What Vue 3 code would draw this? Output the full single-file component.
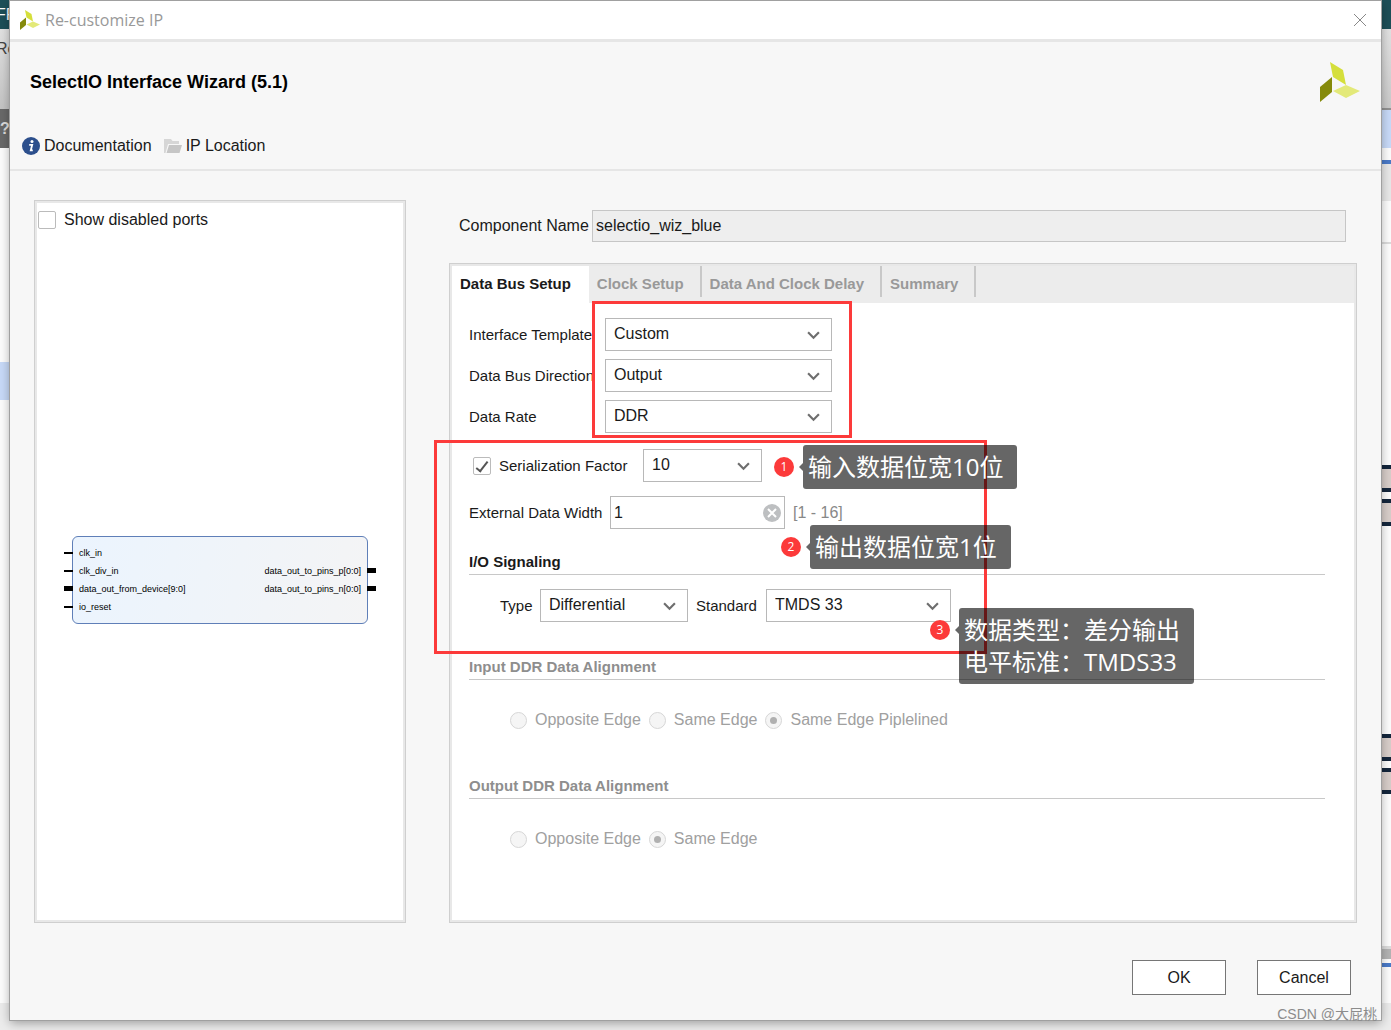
<template>
  <div class="desktop">
    <div class="strip strip-left">
      <span class="peek peek-title">FP</span>
      <span class="peek peek-menu">Re</span>
      <span class="peek peek-help">?</span>
    </div>

    <main class="dialog">
      <header class="titlebar">
        <svg class="logo-small" viewBox="0 0 40 40">
          <path d="M10 0 L23 8 L26 23 L13 15 Z" fill="#d5df3b" />
          <path d="M0 25 L12 15 V30 L0 40 Z" fill="#858a0b" />
          <path d="M13 29 L26 23 L40 29 L26 36 Z" fill="#e3e979" />
        </svg>
        <span class="titlebar-text">Re-customize IP</span>
        <button class="close" aria-label="Close">
          <svg viewBox="0 0 12 12"><path d="M0 0 L12 12 M12 0 L0 12" /></svg>
        </button>
      </header>

      <section class="banner">
        <div class="banner-top">
          <h1>SelectIO Interface Wizard (5.1)</h1>
          <svg class="logo" viewBox="0 0 40 40">
            <path d="M10 0 L23 8 L26 23 L13 15 Z" fill="#d5df3b" />
            <path d="M0 25 L12 15 V30 L0 40 Z" fill="#858a0b" />
            <path d="M13 29 L26 23 L40 29 L26 36 Z" fill="#e3e979" />
          </svg>
        </div>
        <nav class="links">
          <a href="#documentation">
            <svg class="icon" viewBox="0 0 18 18">
              <circle cx="9" cy="9" r="9" fill="#2c4f8c" />
              <circle cx="10" cy="4.600" r="1.500" fill="#fff" />
              <path d="M7.200 7.800 H10.200 L8.800 13.400 H10.800" fill="none" stroke="#fff" stroke-width="1.800" />
            </svg>
            Documentation
          </a>
          <a href="#location">
            <svg class="icon" viewBox="0 0 18 18">
              <path d="M0 16 V2 H7 L8.500 4 H15 V7 H4 L1.500 16 Z" fill="#d6d6d6" />
              <path d="M5 8 H18 L15.500 16 H2.500 Z" fill="#c6c6c6" />
            </svg>
            IP Location
          </a>
        </nav>
      </section>

      <div class="content">
        <section class="preview">
          <label class="check">
            <input v-model="showDisabled" type="checkbox" />
            Show disabled ports
          </label>
          <div class="canvas">
            <div class="block">
              <ul>
                <li v-for="p in inputs" :key="p.name" :class="{ bus: p.bus }">{{ p.name }}</li>
              </ul>
              <ul class="outputs">
                <li v-for="p in outputs" :key="p.name" :class="{ bus: p.bus }">{{ p.name }}</li>
              </ul>
            </div>
          </div>
        </section>

        <section class="config">
          <div class="component">
            <label for="component-name">Component Name</label>
            <input id="component-name" value="selectio_wiz_blue" readonly />
          </div>

          <div class="tabs">
            <div class="tab-list" role="tablist">
              <button
                v-for="tab in tabs"
                :key="tab"
                role="tab"
                :class="{ active: tab === activeTab }"
                @click="activeTab = tab"
              >{{ tab }}</button>
            </div>

            <form class="form" @submit.prevent>
              <div v-for="f in busFields" :key="f.id" class="row">
                <label :for="f.id" class="row-label">{{ f.label }}</label>
                <span class="select wide">
                  <select :id="f.id" v-model="f.value">
                    <option v-for="o in f.options" :key="o">{{ o }}</option>
                  </select>
                  <svg viewBox="0 0 12 8"><path d="M1 1 L6 6 L11 1" /></svg>
                </span>
              </div>

              <div class="row row-serial">
                <label class="check">
                  <input v-model="serialize" type="checkbox" />
                  Serialization Factor
                </label>
                <span class="select narrow">
                  <select v-model="factor" aria-label="Factor">
                    <option>4</option>
                    <option>8</option>
                    <option>10</option>
                  </select>
                  <svg viewBox="0 0 12 8"><path d="M1 1 L6 6 L11 1" /></svg>
                </span>
              </div>

              <div class="row row-width">
                <label for="data-width">External Data Width</label>
                <span class="textbox">
                  <input id="data-width" v-model="dataWidth" />
                  <button type="button" aria-label="Clear" @click="dataWidth = ''">
                    <svg viewBox="0 0 18 18">
                      <circle cx="9" cy="9" r="9" fill="#bdbfc1" />
                      <path d="M5 5 L13 13 M13 5 L5 13" stroke="#fff" stroke-width="2" />
                    </svg>
                  </button>
                </span>
                <span class="range">[1 - 16]</span>
              </div>

              <h2>I/O Signaling</h2>
              <div class="row row-io">
                <label for="io-type" class="type-label">Type</label>
                <span class="select medium">
                  <select id="io-type" v-model="ioType">
                    <option>Differential</option>
                    <option>Single Ended</option>
                  </select>
                  <svg viewBox="0 0 12 8"><path d="M1 1 L6 6 L11 1" /></svg>
                </span>
                <label for="io-standard" class="standard-label">Standard</label>
                <span class="select standard">
                  <select id="io-standard" v-model="ioStandard">
                    <option>TMDS 33</option>
                    <option>LVDS 25</option>
                  </select>
                  <svg viewBox="0 0 12 8"><path d="M1 1 L6 6 L11 1" /></svg>
                </span>
              </div>

              <template v-for="g in alignments" :key="g.id">
                <h2 class="disabled">{{ g.title }}</h2>
                <div class="radios">
                  <label v-for="o in g.options" :key="o">
                    <input type="radio" :name="g.id" :value="o" :checked="o === g.value" disabled />
                    {{ o }}
                  </label>
                </div>
              </template>
            </form>

            <div class="mark mark-bus"></div>
            <div class="mark mark-io"></div>
            <div v-for="(c, i) in callouts" :key="i" class="callout" :class="'callout-' + (i + 1)">
              <span class="badge">{{ i + 1 }}</span>
              <p class="bubble">
                <span v-for="line in c" :key="line">{{ line }}</span>
              </p>
            </div>
          </div>
        </section>
      </div>

      <footer class="actions">
        <button>OK</button>
        <button>Cancel</button>
      </footer>
    </main>

    <div class="strip strip-right"></div>
    <span class="watermark">CSDN @大屁桃</span>
  </div>
</template>

<script setup>
import { ref } from 'vue'

const showDisabled = ref(false)
const serialize = ref(true)
const factor = ref('10')
const dataWidth = ref('1')
const ioType = ref('Differential')
const ioStandard = ref('TMDS 33')

const tabs = ['Data Bus Setup', 'Clock Setup', 'Data And Clock Delay', 'Summary']
const activeTab = ref(tabs[0])

const inputs = [
  { name: 'clk_in' },
  { name: 'clk_div_in' },
  { name: 'data_out_from_device[9:0]', bus: true },
  { name: 'io_reset' },
]
const outputs = [
  { name: 'data_out_to_pins_p[0:0]', bus: true },
  { name: 'data_out_to_pins_n[0:0]', bus: true },
]

const busFields = ref([
  { id: 'template', label: 'Interface Template', value: 'Custom', options: ['Custom', 'SGMII', 'DVI Transmitter'] },
  { id: 'direction', label: 'Data Bus Direction', value: 'Output', options: ['Input', 'Output', 'Bidirectional'] },
  { id: 'rate', label: 'Data Rate', value: 'DDR', options: ['SDR', 'DDR'] },
])

const alignments = [
  {
    id: 'input-ddr',
    title: 'Input DDR Data Alignment',
    options: ['Opposite Edge', 'Same Edge', 'Same Edge Piplelined'],
    value: 'Same Edge Piplelined',
  },
  {
    id: 'output-ddr',
    title: 'Output DDR Data Alignment',
    options: ['Opposite Edge', 'Same Edge'],
    value: 'Same Edge',
  },
]

const callouts = [
  ['输入数据位宽10位'],
  ['输出数据位宽1位'],
  ['数据类型：差分输出', '电平标准：TMDS33'],
]
</script>

<style>
body {
  margin: 0;
  background: #ececec;
}
</style>

<style scoped>
*, *::before, *::after { box-sizing: border-box; }

.desktop {
  position: relative;
  display: grid;
  grid-template-columns: 10px minmax(0, 1fr) 10px;
  min-height: 100vh;
  overflow: hidden;
  font-family: "Liberation Sans", Arial, sans-serif;
  font-size: 16px;
  line-height: 20px;
  color: #1a1a1a;
  background: linear-gradient(#1d4f58 0 29px, #ececec 29px);
}

button, input, select {
  font: inherit;
  color: inherit;
}

/* Slivers of the main window on both sides of the dialog */
.strip-left {
  display: flex;
  flex-direction: column;
  background: linear-gradient(
    #1d4f58 0 29px, #e2e2e2 29px, #c4c4c4 109px, #696969 109px 148px,
    #fdfdfd 148px 362px, #c8daf8 362px 400px, #fdfdfd 400px 1003px, #ececec 1003px
  );
}

.strip-right {
  background: linear-gradient(
    #1d4f58 0 29px, #e2e2e2 29px, #cacaca 108px, #929292 108px 110px,
    #c8daf8 110px 148px, #fdfdfd 148px 160px, #4a7ac8 160px 164px, #e8e8e8 164px 201px,
    #fdfdfd 201px 242px, #dcdcdc 242px 244px, #fdfdfd 244px 465px,
    #14263c 465px 469px, #d8ceca 469px 488px, #14263c 488px 492px, #fdfdfd 492px 499px,
    #14263c 499px 503px, #d8ceca 503px 522px, #14263c 522px 526px, #fdfdfd 526px 734px,
    #14263c 734px 738px, #d8ceca 738px 757px, #14263c 757px 761px, #fdfdfd 761px 768px,
    #14263c 768px 772px, #d8ceca 772px 790px, #14263c 790px 794px, #fdfdfd 794px 946px,
    #dcdcdc 946px 949px, #b4b4b4 949px 959px, #fdfdfd 959px 963px, #4a7ac8 963px 967px,
    #fdfdfd 967px 1003px, #ececec 1003px
  );
}

.peek {
  margin-left: -4px;
  width: 20px;
}

.peek-title {
  line-height: 29px;
  color: #fff;
}

.peek-menu {
  line-height: 40px;
  color: #444;
}

.peek-help {
  margin: 40px 0 0;
  line-height: 39px;
  font-weight: 700;
  color: #ddd;
}

.dialog {
  position: relative;
  display: flex;
  flex-direction: column;
  margin: 1px 0 10px;
  background: #f7f7f7;
  box-shadow: 0 0 0 1px #a0a0a0, 0 3px 10px rgba(0, 0, 0, 0.35);
}

.titlebar {
  display: flex;
  align-items: center;
  height: 41px;
  padding: 0 15px 0 10px;
  background: #fff;
  border-bottom: 3px solid #e6e6e6;
}

.logo-small {
  width: 20px;
  height: 20px;
}

.titlebar-text {
  flex: 1;
  margin-left: 5px;
  font-family: "Open Sans", sans-serif;
  font-size: 16px;
  color: #999;
}

.close {
  display: flex;
  padding: 0;
  background: none;
  border: 0;
}

.close svg {
  width: 12px;
  height: 12px;
  overflow: visible;
  stroke: #888;
}

.banner {
  padding: 20px 21px 13px 12px;
  border-bottom: 2px solid #e6e6e6;
}

.banner-top {
  display: flex;
  justify-content: space-between;
  align-items: center;
  padding-left: 8px;
}

h1 {
  margin: 0;
  font-size: 18px;
  line-height: 20px;
  color: #000;
}

.logo {
  width: 40px;
  height: 40px;
}

.links {
  display: flex;
  gap: 12px;
  margin-top: 34px;
}

.links a {
  display: flex;
  align-items: center;
  gap: 4px;
  color: inherit;
  text-decoration: none;
}

.icon {
  width: 18px;
  height: 18px;
}

.content {
  flex: 1;
  display: grid;
  grid-template-columns: 372px minmax(0, 1fr);
  gap: 43px;
  padding: 29px 24px 0;
}

.preview,
.tabs {
  background: #fff;
  border: 1px solid #cfcfcf;
  box-shadow: inset 0 0 0 2px #e8e8e8;
}

.preview {
  display: flex;
  flex-direction: column;
  padding: 9px 3px;
}

.check {
  display: flex;
  align-items: center;
  gap: 8px;
}

.check input {
  appearance: none;
  display: grid;
  place-items: center;
  width: 18px;
  height: 18px;
  margin: 0;
  background: #fff;
  border: 1px solid #bbb;
  border-radius: 2px;
}

.check input:checked::after {
  content: "";
  width: 6px;
  height: 13px;
  border: solid #555;
  border-width: 0 2px 2px 0;
  transform: rotate(38deg);
}

.canvas {
  flex: 1;
  display: flex;
  flex-direction: column;
  justify-content: center;
  padding: 16px 34px 0;
}

.block {
  display: flex;
  justify-content: space-between;
  padding: 7px 6px;
  font-size: 9px;
  line-height: 18px;
  color: #000;
  background: linear-gradient(100deg, #ebf4fe, #f4f4f5);
  border: 1px solid #5f7fb8;
  border-radius: 6px;
}

.block ul {
  margin: 0;
  padding: 0;
  list-style: none;
}

.block .outputs {
  padding-top: 18px;
}

.block li {
  display: flex;
  align-items: center;
  gap: 6px;
  margin-left: -15px;
}

.block li::before {
  content: "";
  width: 9px;
  height: 2px;
  background: #000;
}

.block li.bus::before {
  height: 5px;
}

.block .outputs li {
  flex-direction: row-reverse;
  margin: 0 -15px 0 0;
}

.config {
  display: flex;
  flex-direction: column;
}

.component {
  display: flex;
  align-items: center;
  gap: 6px;
  padding: 10px 11px 0 10px;
}

.component label {
  width: 127px;
  white-space: nowrap;
}

.component input {
  flex: 1;
  min-width: 0;
  height: 32px;
  padding: 0 3px;
  background: #eee;
  border: 1px solid #c6c6c6;
}

.tabs {
  position: relative;
  flex: 1;
  margin-top: 21px;
  padding: 2px;
}

.tab-list {
  display: flex;
  height: 37px;
  background: #ececec;
}

.tab-list button {
  position: relative;
  padding: 0 18px 2px 8px;
  font-size: 15px;
  font-weight: 700;
  color: #999;
  background: none;
  border: 0;
}

.tab-list button:not(.active)::after {
  content: "";
  position: absolute;
  top: 0;
  right: 0;
  width: 2px;
  height: 31px;
  background: #c8c8c8;
}

.tab-list .active {
  color: #1a1a1a;
  background: #fff;
}

.form {
  padding: 15px 29px 0 17px;
}

.row {
  display: flex;
  align-items: center;
  height: 33px;
  margin-bottom: 8px;
  white-space: nowrap;
}

.row label {
  font-size: 15px;
}

.row-label {
  width: 136px;
}

.select {
  position: relative;
  display: block;
}

.select select {
  appearance: none;
  display: block;
  width: 100%;
  height: 33px;
  padding: 0 24px 2px 8px;
  background: #fff;
  border: 1px solid #b8b8b8;
  border-radius: 0;
}

.select svg {
  position: absolute;
  top: 13px;
  right: 12px;
  width: 13px;
  height: 9px;
  fill: none;
  stroke: #6e6e6e;
  stroke-width: 2;
  pointer-events: none;
}

.wide { width: 227px; }
.narrow { width: 119px; }
.medium { width: 148px; }
.standard { width: 185px; }

.row-serial {
  margin-top: 16px;
  padding-left: 4px;
}

.row-serial .check {
  width: 170px;
}

.row-width {
  gap: 8px;
  margin: 14px 0 0;
}

.row-width label {
  width: 133px;
}

.textbox {
  display: flex;
  align-items: center;
  width: 175px;
  height: 33px;
  padding: 0 3px;
  border: 1px solid #b8b8b8;
}

.textbox input {
  flex: 1;
  min-width: 0;
  padding: 0;
  background: none;
  border: 0;
  outline: 0;
}

.textbox button {
  display: flex;
  padding: 0;
  background: none;
  border: 0;
}

.textbox svg {
  width: 18px;
  height: 18px;
}

.range {
  color: #888;
}

h2 {
  margin: 23px 0 0;
  padding-bottom: 2px;
  font-size: 15px;
  line-height: 20px;
  color: #1a1a1a;
  border-bottom: 1px solid #c8c8c8;
}

h2.disabled {
  color: #8e8e8e;
}

.row-io {
  gap: 8px;
  margin: 14px 0 0;
  padding-left: 31px;
}

.type-label { width: 32px; }
.standard-label { width: 62px; }

.row-io + h2 {
  margin-top: 35px;
}

.radios {
  display: flex;
  gap: 8px;
  margin: 30px 0 46px;
  padding-left: 41px;
  color: #a0a0a0;
}

.radios label {
  display: flex;
  align-items: center;
  gap: 8px;
}

.radios input {
  appearance: none;
  display: grid;
  place-items: center;
  width: 17px;
  height: 17px;
  margin: 0;
  background: #f5f5f5;
  border: 1px solid #d6d6d6;
  border-radius: 50%;
}

.radios input:checked::after {
  content: "";
  width: 7px;
  height: 7px;
  background: #b0b0b0;
  border-radius: 50%;
}

/* Annotations lying over the form */
.mark {
  position: absolute;
  border: 3px solid #fc3a3a;
  pointer-events: none;
}

.mark-bus {
  left: 142px;
  top: 37px;
  width: 260px;
  height: 137px;
}

.mark-io {
  left: -16px;
  top: 176px;
  width: 553px;
  height: 214px;
}

.callout {
  position: absolute;
  display: flex;
  align-items: flex-start;
  gap: 9px;
}

.callout-1 { left: 324px; top: 181px; }
.callout-2 { left: 331px; top: 261px; }
.callout-3 { left: 480px; top: 344px; }

.badge {
  width: 20px;
  margin-top: 12px;
  font-family: "Open Sans", sans-serif;
  font-size: 12px;
  text-align: center;
  color: #fff;
  background: #fc3a3a;
  border-radius: 50%;
}

.bubble {
  position: relative;
  margin: 0;
  padding: 6px 14px 6px 5px;
  font-family: "Open Sans", "Noto Sans CJK SC", sans-serif;
  font-size: 24px;
  line-height: 32px;
  white-space: nowrap;
  color: #fff;
  background: rgba(0, 0, 0, 0.6);
  border-radius: 3px;
}

.bubble span {
  display: block;
}

.bubble::before {
  content: "";
  position: absolute;
  left: -4px;
  top: 18px;
  border: solid transparent;
  border-width: 4px 4px 4px 0;
  border-right-color: rgba(0, 0, 0, 0.6);
}

.actions {
  display: flex;
  justify-content: flex-end;
  gap: 31px;
  padding: 37px 30px 25px;
}

.actions button {
  width: 94px;
  height: 35px;
  background: #fff;
  border: 1px solid #767676;
}

.watermark {
  position: absolute;
  right: 14px;
  bottom: 6px;
  font-family: "Liberation Sans", "Noto Sans CJK SC", sans-serif;
  font-size: 14px;
  color: #8c8c8c;
}
</style>
